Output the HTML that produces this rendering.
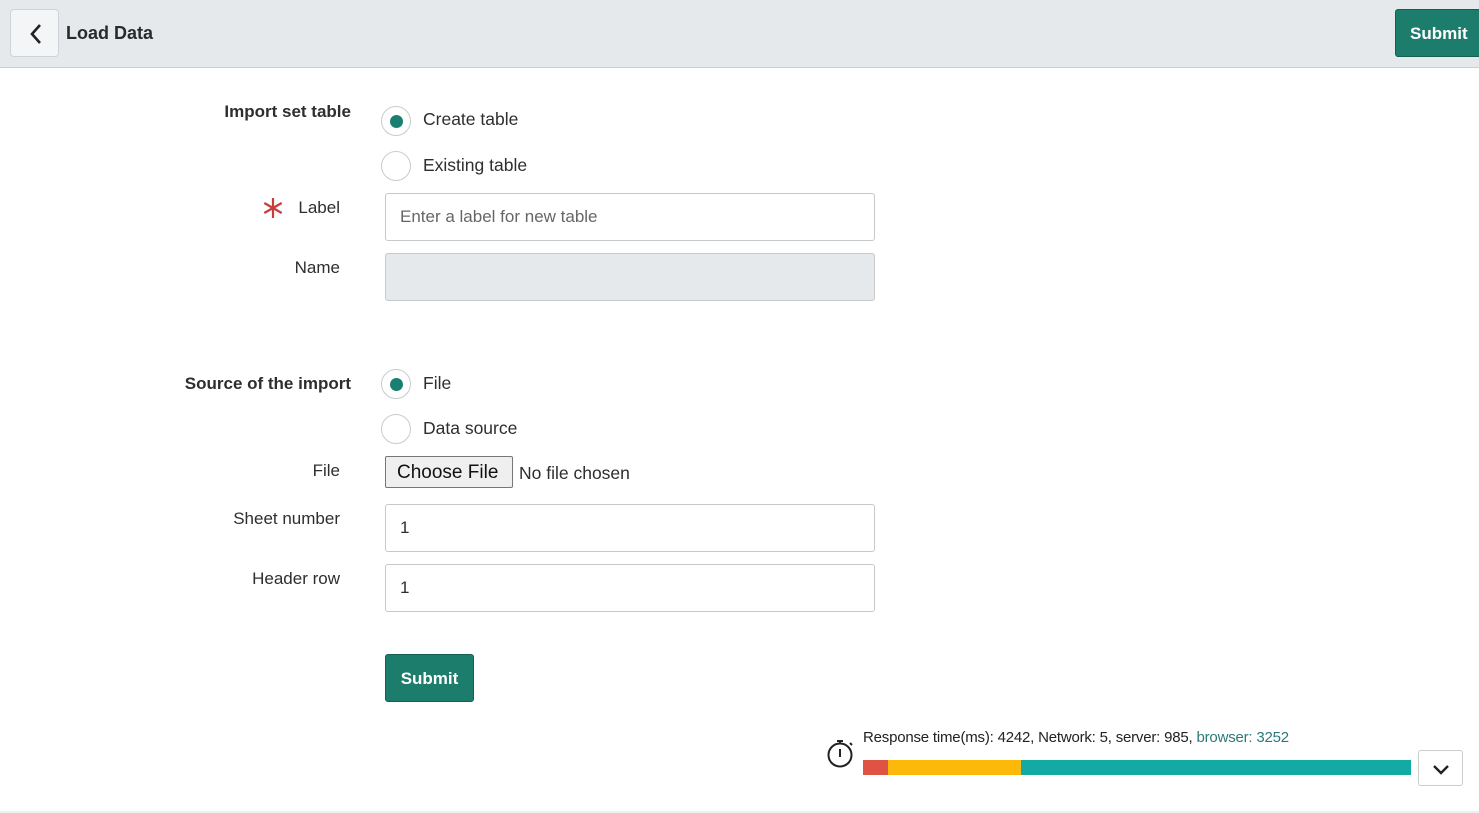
<!DOCTYPE html>
<html><head><meta charset="utf-8"><style>
*{box-sizing:border-box;margin:0;padding:0}
body{width:1479px;height:813px;position:relative;background:#fff;font-family:"Liberation Sans",sans-serif;color:#2e2e2e;overflow:hidden}
.a{position:absolute;white-space:nowrap}
.hdr{left:0;top:0;width:1479px;height:68px;background:#e6e9ec;border-bottom:1px solid #c9ced3}
.back{left:10px;top:9px;width:49px;height:48px;background:#f4f5f6;border:1px solid #cfd3d7;border-radius:4px}
.lbl{font-size:17px;text-align:right;width:200px}
.radio{width:30px;height:30px;border:1px solid #c8cbce;border-radius:50%;background:#fff}
.radio.on::after{content:"";position:absolute;left:8px;top:8px;width:13px;height:13px;border-radius:50%;background:#1a7f70}
.rt{font-size:17.5px}
.inp{left:385px;width:490px;height:48px;border:1px solid #c6c9cc;border-radius:3px;background:#fff;font-size:17px;padding:13px 0 0 14px}
.btn{background:#1c7d6d;color:#fff;font-weight:bold;font-size:17px;border:1px solid #155f53;border-radius:3px;text-align:center}
</style></head><body>
<div class="a hdr"></div>
<div class="a back"><svg width="49" height="48" style="position:absolute;left:0;top:0"><path d="M29 15 L21 24 L29 33" stroke="#222" stroke-width="2.6" fill="none"/></svg></div>
<div class="a" style="left:66px;top:23px;font-size:18px;font-weight:bold;color:#2a2a2a">Load Data</div>
<div class="a btn" style="left:1395px;top:9px;width:90px;height:48px;padding-top:14px;text-align:left;padding-left:14px">Submit</div>

<div class="a lbl" style="left:151px;top:102px;font-weight:bold">Import set table</div>
<div class="a radio on" style="left:381px;top:106px"></div>
<div class="a rt" style="left:423px;top:109px">Create table</div>
<div class="a radio" style="left:381px;top:151px"></div>
<div class="a rt" style="left:423px;top:155px">Existing table</div>

<svg class="a" style="left:262px;top:197px" width="22" height="22"><path d="M11 1v20M2.3 6l17.4 10M2.3 16l17.4-10" stroke="#c83c3c" stroke-width="2.2"/></svg>
<div class="a lbl" style="left:140px;top:198px">Label</div>
<div class="a inp" style="top:193px;color:#666">Enter a label for new table</div>
<div class="a lbl" style="left:140px;top:258px">Name</div>
<div class="a inp" style="top:253px;background:#e6e9ec"></div>

<div class="a lbl" style="left:151px;top:374px;font-weight:bold">Source of the import</div>
<div class="a radio on" style="left:381px;top:369px"></div>
<div class="a rt" style="left:423px;top:373px">File</div>
<div class="a radio" style="left:381px;top:414px"></div>
<div class="a rt" style="left:423px;top:418px">Data source</div>

<div class="a lbl" style="left:140px;top:461px">File</div>
<div class="a" style="left:385px;top:456px;width:128px;height:32px;background:#efefef;border:1px solid #767676;border-radius:2px;font-size:19px;padding:5px 0 0 11px;color:#111">Choose File</div>
<div class="a rt" style="left:519px;top:463px">No file chosen</div>

<div class="a lbl" style="left:140px;top:509px">Sheet number</div>
<div class="a inp" style="top:504px">1</div>
<div class="a lbl" style="left:140px;top:569px">Header row</div>
<div class="a inp" style="top:564px">1</div>

<div class="a btn" style="left:385px;top:654px;width:89px;height:48px;padding-top:14px">Submit</div>

<svg class="a" style="left:824px;top:737px" width="32" height="34"><circle cx="16" cy="18" r="11.5" stroke="#222" stroke-width="2" fill="none"/><path d="M13 4h6M16 4v3M16 12v8M26 6l2 2" stroke="#222" stroke-width="2" fill="none"/></svg>
<div class="a" style="left:863px;top:729px;font-size:15px;color:#222;letter-spacing:-0.2px">Response time(ms): 4242, Network: 5, server: 985, <span style="color:#2a7a77">browser: 3252</span></div>
<div class="a" style="left:863px;top:760px;width:25px;height:15px;background:#e05243"></div>
<div class="a" style="left:888px;top:760px;width:133px;height:15px;background:#fcb90a"></div>
<div class="a" style="left:1021px;top:760px;width:390px;height:15px;background:#13aaa5"></div>
<div class="a" style="left:1418px;top:750px;width:45px;height:36px;border:1px solid #ccc;border-radius:3px;background:#fff"><svg width="45" height="36" style="position:absolute;left:0;top:0"><path d="M15 15l7 7 7-7" stroke="#222" stroke-width="2.4" fill="none"/></svg></div>
<div class="a" style="left:0;top:811px;width:1479px;height:2px;background:#eef0f2"></div>
</body></html>
